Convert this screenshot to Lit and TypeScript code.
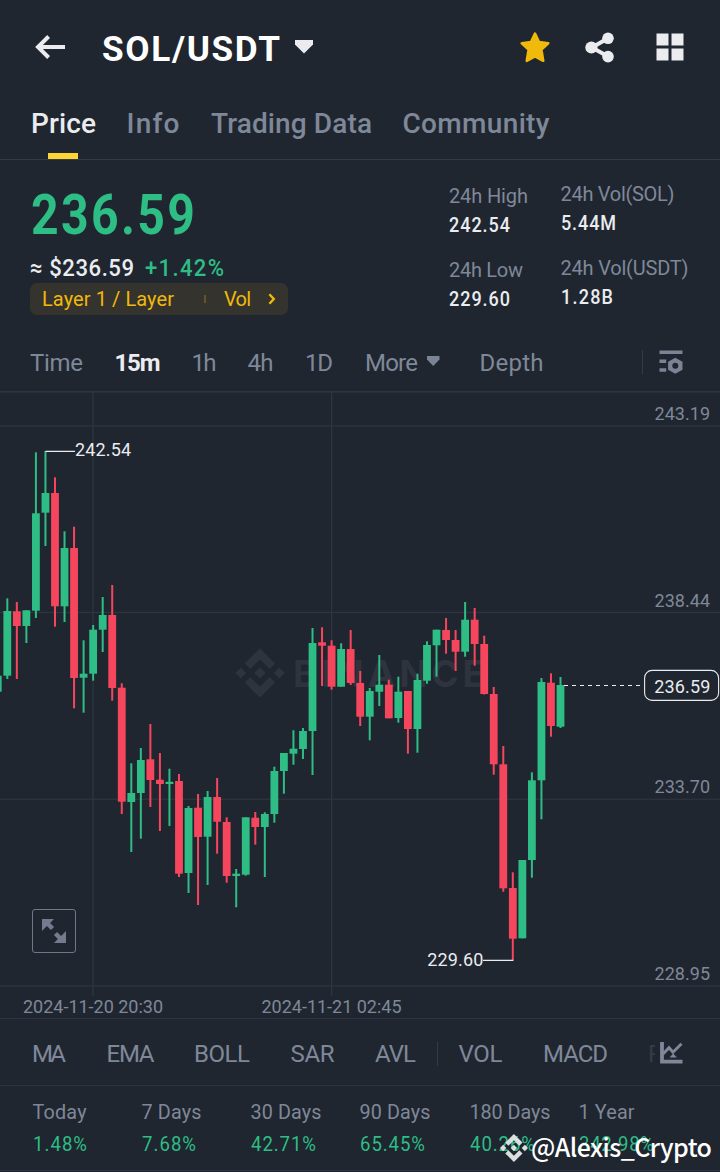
import { LitElement, html, svg, css } from "lit";
import { customElement, property } from "lit/decorators.js";

/** One line of text whose tracking is tuned so that it spans a given width. */
@customElement("fit-label")
class FitLabel extends LitElement {
  @property({ type: Number }) w = 0;
  @property({ type: Number }) squeeze = 1;
  @property() text = "";

  static styles = css`
    :host { display: inline-block; white-space: pre; }
    .run { display: inline-block; transform-origin: 0 50%; }
  `;

  render() {
    return html`<span class="run">${this.text}</span>`;
  }

  updated() {
    this.style.width = `${this.w}px`;
    const run = this.renderRoot.querySelector(".run") as HTMLElement;
    run.style.transform = "none";
    run.style.letterSpacing = "0px";
    const natural = run.getBoundingClientRect().width;
    const gaps = Math.max(1, this.text.length - 1);
    const spacing = (this.w / this.squeeze - natural) / gaps;
    run.style.letterSpacing = `${spacing.toFixed(3)}px`;
    if (this.squeeze !== 1) run.style.transform = `scaleX(${this.squeeze})`;
  }
}

const label = (text: string, w: number, cls = "", squeeze = 1) =>
  html`<fit-label class=${cls} .text=${text} .w=${w} .squeeze=${squeeze}></fit-label>`;

const UP = "#2ebd85";
const DOWN = "#f6465d";

// [direction, high, body top, body bottom, low]
type Candle = [number, number, number, number, number];
const candles: Candle[] = [
  [1, 675.7, 675.7, 691.7, 691.7],
  [1, 598.3, 611, 675.7, 679],
  [0, 602, 611.3, 626, 679],
  [1, 610.3, 610.3, 626, 643],
  [1, 452.3, 513.3, 610.7, 618],
  [1, 451, 493, 512.7, 546],
  [0, 477.3, 493, 606.3, 626.7],
  [1, 531.3, 548, 606.3, 622],
  [0, 526.7, 548, 678, 708.3],
  [1, 640.3, 673.7, 677.7, 712.7],
  [1, 625, 629.7, 673.7, 680.7],
  [1, 597, 615, 629.7, 652],
  [0, 585, 615, 688, 700.7],
  [0, 683.3, 687.7, 801.7, 814],
  [1, 763.3, 793, 802, 852],
  [1, 748, 760, 793, 838.7],
  [0, 724, 759.3, 780, 807],
  [0, 753, 779.7, 784, 831],
  [1, 768.7, 781.8, 784, 826],
  [0, 774, 781, 873.7, 877],
  [1, 806, 808, 873, 893],
  [0, 794, 807.7, 837, 905],
  [1, 791, 797, 836.7, 885],
  [0, 778, 797, 821.7, 853.7],
  [0, 817.3, 822, 876, 882.7],
  [1, 869, 873.7, 876, 907.3],
  [1, 817.3, 817.3, 874.7, 875.7],
  [0, 812, 817.7, 827, 844.7],
  [1, 812.3, 814, 827, 877],
  [1, 766.7, 771, 814, 822.7],
  [1, 753, 753, 771, 793.7],
  [1, 730.3, 748.7, 753.7, 764.7],
  [1, 728, 731, 749, 759],
  [1, 628, 643, 731, 775],
  [0, 627.3, 642.3, 645.7, 686],
  [0, 640.3, 645.7, 686.7, 689.7],
  [1, 643.3, 649, 686.7, 686.7],
  [0, 630, 649, 683, 685],
  [0, 671, 683, 716.7, 726],
  [1, 688, 691, 716.7, 740.3],
  [1, 655, 684.7, 691.7, 706],
  [0, 679.7, 684.7, 718.3, 718.3],
  [1, 676.7, 691.7, 718, 722.7],
  [0, 691, 691, 729, 753.7],
  [1, 673.7, 680, 729, 752.7],
  [1, 641.3, 645, 680.7, 683.7],
  [1, 629.7, 629.7, 645.3, 676.7],
  [0, 618, 630, 640, 653.7],
  [0, 630, 640, 651.7, 671],
  [1, 602, 619.7, 651.7, 656.7],
  [0, 608, 619.7, 644, 665.7],
  [0, 635.7, 644, 694, 694.5],
  [0, 687, 694, 764.3, 774.7],
  [0, 746, 764.3, 888.3, 891.7],
  [0, 872.3, 888, 938.7, 960.3],
  [1, 860, 860, 938.3, 938.3],
  [1, 772.3, 780.3, 860, 877.7],
  [1, 678, 682, 780.3, 819.3],
  [0, 673.3, 682.7, 726, 736.7],
  [1, 677, 685, 726.7, 728],
];

const brandPath =
  "M38.2 53.2 62.8 28.6 87.4 53.2 101.7 38.9 62.8 0 23.9 38.9ZM0 63.3 14.3 49 28.6 63.3 14.3 77.6ZM38.2 73.4 62.8 98 87.4 73.4 101.7 87.7 62.8 126.6 23.9 87.7ZM98 63.3 112.3 49 126.6 63.3 112.3 77.6ZM48.3 63.3 62.8 48.8 77.3 63.3 62.8 77.8Z";

@customElement("price-chart")
class PriceChart extends LitElement {
  static styles = css`
    :host { display: block; height: 628px; }
    svg { display: block; }
    text { font-family: Roboto, sans-serif; font-size: 18px; }
    .grid { fill: #2e3540; }
    .axis { fill: #7f8898; }
    .mark { fill: #eaecef; }
    .brand { fill: #2e333e; font: 700 37px Inter, sans-serif; }
  `;

  render() {
    return html`<svg width="720" height="628" viewBox="0 391 720 628">
      <g class="grid">
        <rect x="0" y="391" width="720" height="1.6" />
        ${[425.2, 611.8, 798.6, 985.2].map((y) => svg`<rect x="0" y=${y} width="720" height="1.3"/>`)}
        ${[92.4, 331].map((x) => svg`<rect x=${x} y="391" width="1.3" height="605"/>`)}
        <rect x="0" y="1018" width="720" height="1" />
      </g>
      <path class="brand" transform="translate(235.3 648.2) scale(.392)" d=${brandPath} />
      <text class="brand" x="293" y="686.5" textLength="192">BINANCE</text>
      ${candles.map(([up, hi, top, bottom, lo], i) => {
        const x = 7.3 + 9.538 * (i - 1);
        return svg`<g fill=${up ? UP : DOWN}>
          <rect x=${x - 1} y=${hi} width="2" height=${lo - hi}/>
          <rect x=${x - 3.9} y=${top} width="7.8" height=${bottom - top}/>
        </g>`;
      })}
      <g stroke="#eaecef" stroke-width="1.1" fill="none">
        <path d="M45.5 451.4H75M483 960.4H513.4" />
        <path d="M564 685.5H641" stroke-dasharray="4 4" />
        <rect x="644.6" y="670.4" width="74" height="30" rx="7.5" />
      </g>
      <text class="mark" x="75" y="456" textLength="56">242.54</text>
      <text class="mark" x="427.3" y="966" textLength="56">229.60</text>
      <text class="mark" x="654.3" y="692.7" textLength="56">236.59</text>
      <g class="axis">
        <text x="654.5" y="419.8" textLength="55.5">243.19</text>
        <text x="654.5" y="606.8" textLength="55.5">238.44</text>
        <text x="654.5" y="793" textLength="55.5">233.70</text>
        <text x="654.5" y="980" textLength="55.5">228.95</text>
        <text x="23" y="1013" textLength="140">2024-11-20 20:30</text>
        <text x="261.5" y="1013" textLength="140">2024-11-21 02:45</text>
      </g>
      <rect x="32.5" y="909.5" width="43" height="43" rx="2.5" fill="#1f2630" stroke="#6f788a" />
      <path fill="#737c8e" d="M42 919h12l-3.9 3.9 4 4-3.2 3.2-4-4L42 931ZM66 943H54l3.9-3.9-4-4 3.2-3.2 4 4L66 931Z" />
    </svg>`;
  }
}

@customElement("app-root")
class AppRoot extends LitElement {
  static styles = css`
    * { box-sizing: border-box; }
    :host {
      display: block;
      width: 720px;
      height: 1172px;
      overflow: hidden;
      position: relative;
      background: #1f2630;
      color: #eaecef;
      font-family: Roboto, "Noto Sans", sans-serif;
    }
    svg { display: block; flex: none; }
    .header { display: flex; align-items: center; height: 97px; padding: 0 36px 0 35px; }
    .back { margin: 0 36px 3px 0; }
    .title { font-size: 35.2px; font-weight: 700; color: #fff; }
    .title-caret { margin: 0 0 4px 15px; }
    .actions { display: flex; align-items: center; margin-left: auto; padding-bottom: 3px; }
    .share { margin: 0 41px 0 35px; }
    .tabs {
      display: grid;
      grid-template-columns: 95.5px 84.5px 191.5px auto;
      height: 63px;
      padding: 1px 0 0 31px;
      border-bottom: 1px solid #333b46;
      font-size: 28px;
      line-height: 52px;
      font-weight: 500;
      color: #7f8898;
    }
    .tab { position: relative; }
    .tab.active { color: #eaecef; }
    .tab.active::after {
      content: "";
      position: absolute;
      left: 17px;
      bottom: 0;
      width: 30px;
      height: 6px;
      background: #fcd535;
    }
    .summary { display: flex; height: 173px; padding: 0 0 0 30px; }
    .quote { width: 419px; padding-top: 24px; }
    .last { display: block; margin-left: 1px; height: 60px; font-size: 56px; line-height: 62px; font-weight: 700; color: #2ebd85; }
    .converted { display: flex; gap: 11px; margin-top: 9px; font-size: 24px; line-height: 30px; font-weight: 500; }
    .up { color: #2ebd85; }
    .tag {
      display: flex;
      align-items: center;
      width: 258px;
      height: 32px;
      padding-left: 12px;
      border-radius: 7px;
      background: #35332d;
      color: #f0b90b;
      font-size: 20px;
      line-height: 32px;
    }
    .tag-rule { width: 2px; height: 8px; margin: 0 18px 0 30px; background: #675422; }
    .chevron { margin-left: 17px; }
    .stats { display: grid; grid-template-columns: 111.5px auto; padding-top: 21.5px; }
    .stat-col { display: flex; flex-direction: column; gap: 16px; }
    .stat-col.vol { margin-top: -2px; }
    .stat { display: flex; flex-direction: column; font-size: 20px; line-height: 29px; }
    .stat-name { color: #7f8898; }
    .stat-value { font-weight: 500; }
    .frames {
      display: grid;
      grid-template-columns: 84.5px 77px 56px 57.5px 60px 114.5px 162px auto;
      height: 58px;
      padding: 0 0 0 30px;
      font-size: 24px;
      line-height: 60px;
      color: #7f8898;
    }
    .frames .active { font-weight: 700; color: #eaecef; }
    .more { display: flex; align-items: center; gap: 9px; height: 60px; }
    .more svg { margin-bottom: 3px; }
    .tools { display: flex; align-items: center; height: 57px; }
    .rule { width: 1.5px; height: 24px; background: #343c48; }
    .settings { margin-left: 16px; }
    .indicators {
      display: grid;
      grid-template-columns: 74.5px 87.5px 96.5px 84.5px 61.5px 22px 84.5px 105px 12px auto;
      height: 67px;
      padding: 2px 0 0 32px;
      border-bottom: 1px solid #2c333e;
      font-size: 24px;
      line-height: 66px;
      color: #7f8898;
    }
    .indicators .rule { align-self: center; }
    .next { width: 7px; overflow: hidden; opacity: 0.22; }
    .study { align-self: center; margin-bottom: 3px; }
    .periods {
      display: grid;
      grid-template-columns: 109px 109px 109px 110px 109px auto;
      height: 85px;
      padding: 11px 0 0 32.5px;
      border-bottom: 1px solid #2c333e;
      font-size: 19.8px;
      line-height: 32px;
    }
    .period { display: flex; flex-direction: column; }
    .period-name { color: #7f8898; }
    .signature {
      position: absolute;
      left: 500px;
      top: 1130px;
      display: flex;
      align-items: center;
      gap: 3px;
      height: 36px;
      color: #fff;
      font: 500 25px/32px "Noto Sans CJK SC", sans-serif;
    }
    .handle { height: 36px; }
  `;

  render() {
    const periods: [string, number, string, number][] = [
      ["Today", 54, "1.48%", 54],
      ["7 Days", 60, "7.68%", 54],
      ["30 Days", 71, "42.71%", 65],
      ["90 Days", 71, "65.45%", 65],
      ["180 Days", 81, "40.26%", 65],
      ["1 Year", 56, "342.98%", 75],
    ];
    return html`
      <header class="header">
        <svg class="back" width="31" height="26" viewBox="0 0 31 26">
          <path d="M30 13H3M13.6 2.5 3 13 13.6 23.5" fill="none" stroke="#eaecef" stroke-width="4" />
        </svg>
        ${label("SOL/USDT", 178, "title")}
        <svg class="title-caret" width="18" height="14" viewBox="0 0 18 14">
          <path d="M0 0h18v4.5L9 13.5 0 4.5Z" fill="#eaecef" />
        </svg>
        <div class="actions">
          <svg width="30" height="31" viewBox="0 0 30 31">
            <path d="M15 1.6 19 10l9.2 1.2-6.8 6.4 1.8 11.2L15 24.4l-8.2 4.4 1.8-11.2-6.8-6.4L11 10Z" fill="#f0b90b" stroke="#f0b90b" stroke-width="2.6" stroke-linejoin="round" />
          </svg>
          <svg class="share" width="30" height="31" viewBox="0 0 30 31">
            <path d="M23 6.3 7 15.5l16 9" fill="none" stroke="#eaecef" stroke-width="4" />
            <g fill="#eaecef"><circle cx="23" cy="6.3" r="5.8" /><circle cx="6.4" cy="15.5" r="6.1" /><circle cx="23" cy="24.6" r="5.8" /></g>
          </svg>
          <svg width="28" height="28" viewBox="0 0 28 28">
            <path d="M.5.5h12v12H.5ZM15.5.5h12v12h-12ZM.5 15.5h12v12H.5ZM15.5 15.5h12v12h-12Z" fill="#eaecef" />
          </svg>
        </div>
      </header>

      <nav class="tabs">
        <div class="tab active">${label("Price", 65)}</div>
        <div class="tab">${label("Info", 53)}</div>
        <div class="tab">${label("Trading Data", 161)}</div>
        <div class="tab">${label("Community", 147)}</div>
      </nav>

      <section class="summary">
        <div class="quote">
          ${label("236.59", 164, "last", 0.86)}
          <div class="converted">${label("≈ $236.59", 104, "", 0.92)}${label("+1.42%", 79, "up", 0.92)}</div>
          <div class="tag">
            ${label("Layer 1 / Layer", 132)}
            <span class="tag-rule"></span>
            ${label("Vol", 27)}
            <svg class="chevron" width="8" height="12" viewBox="0 0 8 12">
              <path d="M1.4 1.2 5.8 6l-4.4 4.8" fill="none" stroke="#f0b90b" stroke-width="2.4" />
            </svg>
          </div>
        </div>
        <div class="stats">
          <div class="stat-col">
            <div class="stat">${label("24h High", 79, "stat-name")}${label("242.54", 61, "stat-value", 0.9)}</div>
            <div class="stat">${label("24h Low", 74, "stat-name")}${label("229.60", 61, "stat-value", 0.9)}</div>
          </div>
          <div class="stat-col vol">
            <div class="stat">${label("24h Vol(SOL)", 114, "stat-name")}${label("5.44M", 55, "stat-value", 0.9)}</div>
            <div class="stat">${label("24h Vol(USDT)", 128, "stat-name")}${label("1.28B", 52, "stat-value", 0.9)}</div>
          </div>
        </div>
      </section>

      <nav class="frames">
        ${label("Time", 53)}${label("15m", 46, "active")}${label("1h", 25)}${label("4h", 26)}${label("1D", 28)}
        <span class="more">${label("More", 53)}
          <svg width="13" height="11" viewBox="0 0 13 11"><path d="M0 0h12.5v3.5L6.2 10 0 3.5Z" fill="#7b8495" /></svg>
        </span>
        ${label("Depth", 64)}
        <span class="tools">
          <span class="rule"></span>
          <svg class="settings" width="24" height="24" viewBox="0 0 24 24">
            <path fill="#7b8495" fill-rule="evenodd" d="M.5.5h23V4H.5ZM.5 9.5h6.7V13H.5ZM.5 18.2h6.7v3.6H.5ZM16.3 7.8l7.2 4v8l-7.2 4-7.2-4v-8Zm0 5a3 3 0 1 0 0 6 3 3 0 0 0 0-6Z" />
          </svg>
        </span>
      </nav>

      <price-chart></price-chart>

      <nav class="indicators">
        ${label("MA", 34)}${label("EMA", 48)}${label("BOLL", 56)}${label("SAR", 44)}${label("AVL", 41)}
        <span class="rule"></span>
        ${label("VOL", 44)}${label("MACD", 65)}
        <span class="next">R</span>
        <svg class="study" width="23" height="24" viewBox="0 0 23 24">
          <path d="M2 1v19.6h20.5" fill="none" stroke="#7f8898" stroke-width="3.8" />
          <path d="M3 13 9 6.8l4 4.4 8.5-8.4" fill="none" stroke="#7f8898" stroke-width="3" />
          <path d="M9.5 16.4 13.2 12.4l3.7 4Z" fill="#7f8898" />
        </svg>
      </nav>

      <section class="periods">
        ${periods.map(
          ([name, nw, value, vw]) => html`<div class="period">${label(name, nw, "period-name")}${label(value, vw, "up", 0.94)}</div>`
        )}
      </section>

      <div class="signature">
        <svg width="28" height="28" viewBox="0 0 126.6 126.6"><path d=${brandPath} fill="#dcdee0" /></svg>
        ${label("@Alexis_Crypto", 181, "handle")}
      </div>
    `;
  }
}
